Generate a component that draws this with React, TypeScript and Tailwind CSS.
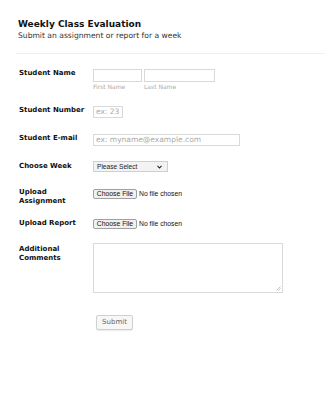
import type { ReactNode } from "react";

function Row({
  label,
  labelOffset = 0,
  className = "",
  children,
}: {
  label: ReactNode;
  labelOffset?: number;
  className?: string;
  children: ReactNode;
}) {
  return (
    <div className={`flex items-start ${className}`}>
      <div
        className="w-[74px] shrink-0 text-[7px] leading-[9px] font-bold text-[#111]"
        style={{ marginTop: labelOffset }}
      >
        {label}
      </div>
      <div>{children}</div>
    </div>
  );
}

function FileField() {
  return (
    <div className="flex items-center font-['Liberation_Sans',Arial,sans-serif] text-[6.8px]">
      <span className="flex h-[10px] w-[44px] items-center justify-center rounded-[2px] border border-[#a0a0a0] bg-[#f0f0f0] text-[#111]">
        Choose File
      </span>
      <span className="ml-[2px] text-[#111]">No file chosen</span>
    </div>
  );
}

export default function App() {
  return (
    <div className="h-[400px] w-[325px] overflow-hidden bg-white font-['DejaVu_Sans',Verdana,sans-serif] text-[#111]">
      {/* Header */}
      <div className="px-[18px] pt-[19px]">
        <h1 className="text-[9px] leading-[11px] font-bold">Weekly Class Evaluation</h1>
        <p className="mt-[1px] text-[7.6px] leading-[9px] text-[#333]">
          Submit an assignment or report for a week
        </p>
      </div>
      <div className="mt-[13px] ml-[16px] border-t border-[#eeeeee]" />

      {/* Form */}
      <div className="flex flex-col pl-[19px]">
        <Row label="Student Name" className="mt-[15px]">
          <div className="flex gap-[2px]">
            <div>
              <div className="h-[13px] w-[49px] border border-[#d9d9d9]" />
              <div className="mt-[2px] text-[6px] leading-[6px] text-[#aaa]">First Name</div>
            </div>
            <div>
              <div className="h-[13px] w-[71px] border border-[#d9d9d9]" />
              <div className="mt-[2px] text-[6px] leading-[6px] text-[#aaa]">Last Name</div>
            </div>
          </div>
        </Row>

        <Row label="Student Number" className="mt-[16px]">
          <div className="flex h-[12px] w-[30px] items-center border border-[#d9d9d9] pl-[2px] text-[7.5px] text-[#aaa]">
            ex: 23
          </div>
        </Row>

        <Row label="Student E-mail" className="mt-[16px]">
          <div className="flex h-[12px] w-[147px] items-center border border-[#d9d9d9] pl-[2px] text-[7.5px] text-[#aaa]">
            ex: myname@example.com
          </div>
        </Row>

        <Row label="Choose Week" labelOffset={1} className="mt-[15px]">
          <div className="flex h-[11px] w-[75px] items-center justify-between border border-[#cfcfcf] bg-[#f3f3f3] pr-[5px] pl-[3px] font-['Liberation_Sans',Arial,sans-serif] text-[6.6px] text-[#222]">
            <span>Please Select</span>
            <svg width="5" height="4" viewBox="0 0 5 4">
              <path d="M0.5 0.8 L2.5 3 L4.5 0.8" fill="none" stroke="#222" strokeWidth="1.1" />
            </svg>
          </div>
        </Row>

        <Row
          label={
            <>
              Upload
              <br />
              Assignment
            </>
          }
          className="mt-[16px]"
        >
          <div className="mt-[1px]">
            <FileField />
          </div>
        </Row>

        <Row label="Upload Report" className="mt-[13px]">
          <FileField />
        </Row>

        <Row
          label={
            <>
              Additional
              <br />
              Comments
            </>
          }
          labelOffset={2}
          className="mt-[14px]"
        >
          <div className="relative h-[50px] w-[190px] border border-[#d9d9d9]">
            {/* resize grip */}
            <svg
              className="absolute right-[1px] bottom-[1px]"
              width="5"
              height="5"
              viewBox="0 0 5 5"
            >
              <path d="M4.5 0.5 L0.5 4.5 M4.5 2.5 L2.5 4.5" stroke="#b5b5b5" strokeWidth="0.8" />
            </svg>
          </div>
        </Row>

        <div className="mt-[22px] ml-[77px]">
          <button className="flex h-[15px] w-[37px] items-center justify-center rounded-[2px] border border-[#d0d0d0] bg-[#f7f7f7] text-[7px] text-[#666] shadow-[0_1px_1px_rgba(0,0,0,0.08)]">
            Submit
          </button>
        </div>
      </div>
    </div>
  );
}
